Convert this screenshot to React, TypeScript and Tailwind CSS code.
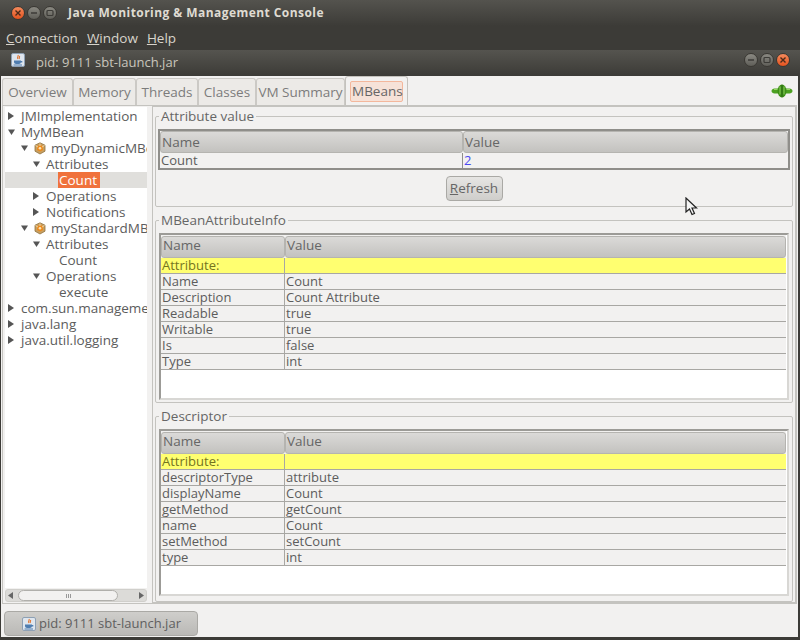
import React from "react";

const font = { fontFamily: '"Open Sans", "Noto Sans", sans-serif' };

function WinBtn({ kind }: { kind: "close" | "min" | "max" }) {
  const bg = kind === "close" ? "bg-[linear-gradient(#f48a5c,#e5531f)] border-[#3a3833]" : "bg-[linear-gradient(#8a8982,#5f5e58)] border-[#3a3833]";
  return (
    <div className={`w-[14px] h-[14px] rounded-full border flex items-center justify-center ${bg}`}>
      <svg width="8" height="8" viewBox="0 0 8 8">
        {kind === "close" && <path d="M1.500 1.500l5 5M6.500 1.500l-5 5" stroke="#4a2a1a" strokeWidth="1.400" />}
        {kind === "min" && <path d="M1 4h6" stroke="#3c3b37" strokeWidth="1.500" />}
        {kind === "max" && <rect x="1" y="1.500" width="6" height="5" rx="1" fill="none" stroke="#3c3b37" strokeWidth="1.200" />}
      </svg>
    </div>
  );
}

function JavaIcon() {
  return (
    <svg width="14" height="14" viewBox="0 0 14 14" className="shrink-0">
      <rect x="0.500" y="0.500" width="13" height="13" rx="1.500" fill="#dfe6ee" stroke="#8ea0b4" />
      <path d="M7 2c1 1.500-1.500 2.200 0 4M8.500 3c.6 1-1 1.500 0 2.800" stroke="#e2712b" strokeWidth="1.100" fill="none" />
      <path d="M3 7.500h7v1.500c0 1.200-1 2-2 2H5c-1 0-2-.8-2-2z M10 8h1.300v1.400H10" fill="#4f7db0" />
      <path d="M2.500 12h8.500" stroke="#4f7db0" />
    </svg>
  );
}

function BeanIcon() {
  return (
    <svg width="12" height="13" viewBox="0 0 12 13" className="shrink-0">
      <path d="M6 .8l5 2.400v6L6 12 1 9.200v-6z" fill="#c9a060" stroke="#8f7240" strokeWidth=".8" />
      <path d="M6 2.800l3 1.500v3.600L6 9.500 3 7.900V4.300z" fill="#ea8a20" />
      <path d="M6 1.500v2.500M1.500 3.500L4 5M10.500 3.500L8 5" stroke="#f7e2b8" strokeWidth=".8" />
      <circle cx="6" cy="6.200" r="1.300" fill="#fbe3b4" />
    </svg>
  );
}

function Connector() {
  return (
    <svg width="22" height="14" viewBox="0 0 22 14">
      <path d="M0.500 7c0-1.300 1.500-2.500 3-2.500H18.500c1.500 0 3 1.200 3 2.500s-1.500 2.500-3 2.500H3.500C2 9.500.500 8.300.500 7z" fill="#4ca021" />
      <path d="M3 5.500h16" stroke="#96d862" />
      <ellipse cx="11" cy="7" rx="4.500" ry="6.500" fill="#3d8f18" />
      <path d="M11 .8v12.400" stroke="#2a6410" />
      <path d="M9 2.500v8M13 2.500v8" stroke="#8ed05a" />
    </svg>
  );
}

function Tab({ label, w, active }: { label: string; w: string; active?: boolean }) {
  if (active) {
    return (
      <div className={`${w} h-[29px] bg-[#f2f1f0] border border-b-0 border-[#c4c2bd] rounded-t-[3px] flex items-start pt-[4px] px-[4px]`}>
        <div className="w-full h-[21px] border border-[#f3b79c] bg-[#f6e2d8] rounded-[2px] text-[#666] text-[13.5px] leading-[19px] pl-[1px]">{label}</div>
      </div>
    );
  }
  return (
    <div className={`${w} h-[27px] mt-[2px] bg-[#eceae7] border border-b-0 border-[#cbc9c5] rounded-t-[3px] text-[#7c7c7c] text-[13.5px] leading-[27px] text-center`}>
      {label}
    </div>
  );
}

type Row = { label: string; pad: string; arrow?: "r" | "d"; arrowPad?: string; bean?: boolean; selected?: boolean };
const tree: Row[] = [
  { label: "JMImplementation", pad: "pl-[5px]", arrow: "r", arrowPad: "pl-[3px]" },
  { label: "MyMBean", pad: "pl-[5px]", arrow: "d", arrowPad: "pl-[3px]" },
  { label: "myDynamicMBean", pad: "pl-[5px]", arrow: "d", arrowPad: "pl-[16px]", bean: true },
  { label: "Attributes", pad: "pl-[5px]", arrow: "d", arrowPad: "pl-[28px]" },
  { label: "Count", pad: "pl-[54px]", selected: true },
  { label: "Operations", pad: "pl-[5px]", arrow: "r", arrowPad: "pl-[28px]" },
  { label: "Notifications", pad: "pl-[5px]", arrow: "r", arrowPad: "pl-[28px]" },
  { label: "myStandardMBean", pad: "pl-[5px]", arrow: "d", arrowPad: "pl-[16px]", bean: true },
  { label: "Attributes", pad: "pl-[5px]", arrow: "d", arrowPad: "pl-[28px]" },
  { label: "Count", pad: "pl-[54px]" },
  { label: "Operations", pad: "pl-[5px]", arrow: "d", arrowPad: "pl-[28px]" },
  { label: "execute", pad: "pl-[54px]" },
  { label: "com.sun.management", pad: "pl-[5px]", arrow: "r", arrowPad: "pl-[3px]" },
  { label: "java.lang", pad: "pl-[5px]", arrow: "r", arrowPad: "pl-[3px]" },
  { label: "java.util.logging", pad: "pl-[5px]", arrow: "r", arrowPad: "pl-[3px]" },
];

function Arrow({ dir }: { dir: "r" | "d" }) {
  return (
    <svg width="8" height="8" viewBox="0 0 8 8" className="shrink-0">
      {dir === "r" ? <path d="M0 0l6 4-6 4z" fill="#555" /> : <path d="M0 1.500h7L3.500 7z" fill="#555" />}
    </svg>
  );
}

function TreeRow({ r }: { r: Row }) {
  return (
    <div className={`h-[16px] flex items-center whitespace-nowrap text-[13.5px] text-[#5c5c5c] ${r.selected ? "bg-[#e0dfdc]" : ""} ${r.arrowPad ?? ""}`}>
      {r.arrow && <Arrow dir={r.arrow} />}
      {r.bean && <div className="ml-[5px]"><BeanIcon /></div>}
      <span className={`${r.pad} leading-[16px]`}>
        <span className={r.selected ? "bg-[#f0723c] text-[#fff] inline-block w-[42px] pl-[1px] -ml-[1px]" : ""}>{r.label}</span>
      </span>
    </div>
  );
}

function HeaderCell({ label, w, lead }: { label: string; w: string; lead: string }) {
  return (
    <div className={`${w} h-[22px] border border-[#b5b4b0] rounded-[3px] bg-[linear-gradient(#dbdad8,#c3c2bf)] text-[13.5px] text-[#666] pl-[1px] ${lead}`}>
      {label}
    </div>
  );
}

function Cells({ a, b, colA, yellow }: { a: string; b: string; colA: string; yellow?: boolean }) {
  return (
    <div className={`flex h-[16px] border-b border-[#a8a7a3] text-[13px] leading-[15px] whitespace-nowrap ${yellow ? "bg-[#ffff70] text-[#74741e]" : "bg-[#f2f1f0] text-[#5c5c5c]"}`}>
      <div className={`${colA} border-r border-[#a8a7a3] pl-[1px] shrink-0`}>{a}</div>
      <div className="pl-[1px] flex-1">{b}</div>
    </div>
  );
}

function Group({ title, className, children }: { title: string; className: string; children: React.ReactNode }) {
  return (
    <fieldset className={`border border-[#c4c3bf] rounded-[2px] px-[3px] min-w-0 ${className}`}>
      <legend className="px-[2px] text-[13.5px] leading-[14px] h-[14px] text-[#666]">{title}</legend>
      {children}
    </fieldset>
  );
}

function InfoTable({ rows }: { rows: [string, string][] }) {
  return (
    <div className="h-[167px] border-2 border-[#9c9b97] border-b-[#d8d7d4] border-r-[#d8d7d4] bg-white">
      <div className="mr-[1px]">
        <div className="flex pt-[1px] bg-[#f2f1f0]">
          <HeaderCell label="Name" w="w-[124px] shrink-0" lead="leading-[16px]" />
          <HeaderCell label="Value" w="flex-1" lead="leading-[16px]" />
        </div>
        <Cells a="Attribute:" b="" colA="w-[124px]" yellow />
        {rows.map(([a, b]) => (
          <Cells key={a} a={a} b={b} colA="w-[124px]" />
        ))}
      </div>
    </div>
  );
}

export default function App() {
  return (
    <div className="relative w-[800px] h-[640px] overflow-hidden bg-[#3c3b37] flex flex-col" style={font}>
      <div className="h-[26px] shrink-0 bg-[linear-gradient(#54534e,#3c3b37)] flex items-center pl-[11px]">
        <div className="flex gap-[2px] w-[57px]">
          <WinBtn kind="close" />
          <WinBtn kind="min" />
          <WinBtn kind="max" />
        </div>
        <span className="text-[12px] font-bold text-[#dfdbd2] tracking-[0.44px]">Java Monitoring &amp; Management Console</span>
      </div>
      <div className="h-[24px] shrink-0 flex items-center gap-[9px] pl-[6px] text-[13.5px] text-[#d8d4cb]">
        <span><u>C</u>onnection</span>
        <span><u>W</u>indow</span>
        <span><u>H</u>elp</span>
      </div>
      <div className="h-[26px] shrink-0 bg-[linear-gradient(#55544f,#3c3b37)] flex items-center pl-[11px] pr-[10px]">
        <div className="-mt-[6px]"><JavaIcon /></div>
        <span className="ml-[11px] text-[13px] text-[#c9c5bc]">pid: 9111 sbt-launch.jar</span>
        <div className="ml-auto flex gap-[2px] -mt-[6px]">
          <WinBtn kind="min" />
          <WinBtn kind="max" />
          <WinBtn kind="close" />
        </div>
      </div>

      <div className="h-[561px] shrink-0 ml-[1px] mr-[2px] bg-[#f2f1f0] flex flex-col">
        <div className="h-[29px] shrink-0 flex items-start pl-[1px] pr-[5px]">
          <Tab label="Overview" w="w-[71px]" />
          <Tab label="Memory" w="w-[63px]" />
          <Tab label="Threads" w="w-[62px]" />
          <Tab label="Classes" w="w-[58px]" />
          <Tab label="VM Summary" w="w-[89px]" />
          <Tab label="MBeans" w="w-[63px]" active />
          <div className="ml-auto mt-[8px]"><Connector /></div>
        </div>
        <div className="h-[499px] shrink-0 mx-[1px] border border-[#c4c3bf] flex bg-[#f2f1f0]">
          <div className="w-[144px] shrink-0 flex flex-col pl-[2px] pt-[1px]">
            <div className="flex-1 bg-white overflow-hidden pt-[1px]">
              {tree.map((r, i) => (
                <TreeRow key={i} r={r} />
              ))}
            </div>
            <div className="h-[13px] mt-[1px] mb-[1px] flex items-center gap-[2px] px-[2px] border border-[#d0cfcb] rounded-[3px] bg-[#dcdbd8]">
              <svg width="5" height="7" viewBox="0 0 5 7"><path d="M5 0L0 3.500 5 7z" fill="#666" /></svg>
              <div className="w-[100px] h-[11px] ml-[3px] rounded-full bg-[#f2f1f0] border border-[#b0afab] flex items-center justify-center gap-[1px]">
                <i className="w-[1px] h-[4px] bg-[#999]" />
                <i className="w-[1px] h-[4px] bg-[#999]" />
                <i className="w-[1px] h-[4px] bg-[#999]" />
              </div>
              <svg className="ml-auto" width="5" height="7" viewBox="0 0 5 7"><path d="M0 0l5 3.500L0 7z" fill="#666" /></svg>
            </div>
          </div>
          <div className="w-[5px] shrink-0" />
          <div className="flex-1 min-w-0 border border-[#c4c3bf] px-[2px] pt-[2px] flex flex-col">
            <Group title="Attribute value" className="h-[98px] shrink-0 pt-[6px]">
              <div className="border-2 border-[#8f8e8a] -mx-[1px]">
                <div className="flex">
                  <HeaderCell label="Name" w="w-[303px] shrink-0" lead="leading-[20px]" />
                  <HeaderCell label="Value" w="flex-1" lead="leading-[20px]" />
                </div>
                <div className="flex h-[15px] text-[13px] leading-[15px] text-[#5c5c5c]">
                  <div className="w-[303px] border-r border-[#8f8e8a] pl-[1px]">Count</div>
                  <div className="pl-[1px] text-[#4a4af0]">2</div>
                </div>
              </div>
              <div className="flex justify-center mt-[6px]">
                <div className="w-[57px] h-[25px] rounded-[4px] border border-[#aaa9a5] bg-[linear-gradient(#e6e5e3,#cfcecb)] text-[13.5px] leading-[23px] text-center text-[#666]">
                  <u>R</u>efresh
                </div>
              </div>
            </Group>
            <Group title="MBeanAttributeInfo" className="h-[190px] shrink-0 mt-[6px] pt-[6px]">
              <InfoTable rows={[
                ["Name", "Count"],
                ["Description", "Count Attribute"],
                ["Readable", "true"],
                ["Writable", "true"],
                ["Is", "false"],
                ["Type", "int"],
              ]} />
            </Group>
            <Group title="Descriptor" className="h-[193px] shrink-0 mt-[6px] pt-[6px]">
              <InfoTable rows={[
                ["descriptorType", "attribute"],
                ["displayName", "Count"],
                ["getMethod", "getCount"],
                ["name", "Count"],
                ["setMethod", "setCount"],
                ["type", "int"],
              ]} />
            </Group>
          </div>
        </div>
        <div className="flex-1 flex items-start pl-[3px] pt-[7px]">
          <div className="w-[194px] h-[25px] rounded-[4px] border border-[#aaa9a5] bg-[linear-gradient(#cfcecb,#bab9b6)] flex items-center pl-[17px] gap-[3px] text-[13px] text-[#5f5f5f]">
            <JavaIcon />
            <span>pid: 9111 sbt-launch.jar</span>
          </div>
        </div>
      </div>

      <svg className="absolute left-[685px] top-[197px]" width="13" height="20" viewBox="0 0 13 20">
        <path d="M1 1v14l3.500-3 2.500 5.500 2.500-1-2.500-5.500h4.500z" fill="#f5f5f5" stroke="#222" strokeWidth="1.200" />
      </svg>
    </div>
  );
}
